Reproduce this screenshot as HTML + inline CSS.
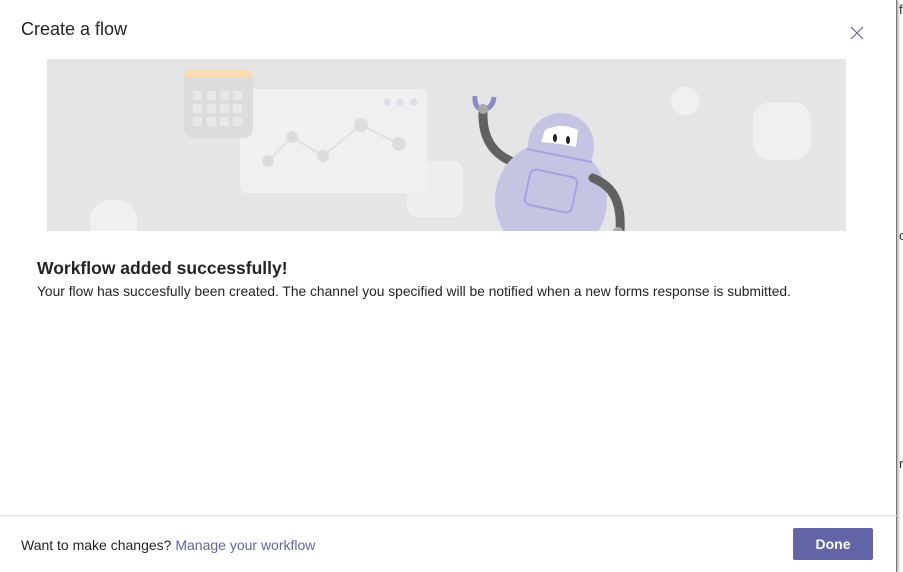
<!DOCTYPE html>
<html><head><meta charset="utf-8"><style>
*{margin:0;padding:0;box-sizing:border-box}
body{width:903px;height:572px;overflow:hidden;background:#fff;font-family:"Liberation Sans",sans-serif;color:#252423;position:relative}
.dlg{position:absolute;left:0;top:0;width:897px;height:572px;background:#fff;border-right:1px solid #777;box-shadow:1px 0 3px rgba(0,0,0,.4)}
.t{position:absolute;left:21px;top:19px;font-size:18px;color:#252423}
.x{position:absolute;left:850px;top:26px}
.ill{position:absolute;left:47px;top:59px;width:799px;height:172px;background:#e5e5e5;overflow:hidden}
.h{position:absolute;left:37px;top:258px;font-size:17.5px;font-weight:bold}
.p{position:absolute;left:37px;top:284px;font-size:13.8px;white-space:nowrap}
.sep{position:absolute;left:0;top:515px;width:897px;height:1px;background:#e1dfdd}
.f{position:absolute;left:21px;top:537px;font-size:14px}
.f a{color:#6264a7;text-decoration:none}
.btn{position:absolute;left:793px;top:528px;width:80px;height:32px;background:#6264a7;color:#fff;font-weight:bold;font-size:14px;text-align:center;line-height:32px;border-radius:2px}
.side{position:absolute;left:899px;font-size:13px;color:#333}
</style></head><body>
<div class="side" style="top:2px">f</div>
<div class="side" style="top:228px">o</div>
<div class="side" style="top:456px">r</div>
<div class="dlg">
<div class="t">Create a flow</div>
<svg class="x" width="14" height="14" viewBox="0 0 14 14"><path d="M1 1L13 13M13 1L1 13" stroke="#6264a7" stroke-width="1.2"/></svg>
<div class="ill">
<svg width="799" height="172" viewBox="47 59 799 172">
<rect x="240" y="89" width="187" height="104" rx="6" fill="#f0f0f0"/>
<circle cx="387" cy="102" r="3.5" fill="#dcdcea"/><circle cx="400" cy="102" r="3.5" fill="#dcdcea"/><circle cx="414" cy="102" r="3.5" fill="#dcdcea"/>
<polyline points="268,161 292,137 323,156 361,125 399,144" fill="none" stroke="#e0e0e0" stroke-width="2"/>
<g fill="#dcdcdc"><circle cx="268" cy="161" r="6"/><circle cx="292" cy="137" r="6"/><circle cx="323" cy="156" r="6"/><circle cx="361" cy="125" r="7"/><circle cx="399" cy="144" r="7"/></g>
<rect x="184" y="69" width="69" height="69" rx="9" fill="#dcdcdc"/>
<path d="M184 78a9 9 0 0 1 9-9h51a9 9 0 0 1 9 9z" fill="#fbdcb0"/>
<g fill="#e8e8e8">
<rect x="193" y="91" width="9" height="9"/><rect x="207" y="91" width="9" height="9"/><rect x="220" y="91" width="9" height="9"/><rect x="233" y="91" width="9" height="9"/>
<rect x="193" y="104" width="9" height="9"/><rect x="207" y="104" width="9" height="9"/><rect x="220" y="104" width="9" height="9"/><rect x="233" y="104" width="9" height="9"/>
<rect x="193" y="117" width="9" height="9"/><rect x="207" y="117" width="9" height="9"/><rect x="220" y="117" width="9" height="9"/><rect x="233" y="117" width="9" height="9"/>
</g>
<rect x="407" y="161" width="56" height="56" rx="10" fill="#f0f0f0" opacity=".9"/>
<rect x="90" y="200" width="47" height="50" rx="20" fill="#f0f0f0"/>
<circle cx="685" cy="101" r="14" fill="#f0f0f0"/>
<rect x="753" y="102" width="58" height="58" rx="18" fill="#f0f0f0"/>
<path d="M513 162C495 155 482 140 483 112" fill="none" stroke="#616161" stroke-width="9" stroke-linecap="round"/>
<path d="M475 96 Q474 108 483 110 Q493 108 494 97" fill="none" stroke="#8b8cc7" stroke-width="5"/>
<circle cx="483" cy="109" r="5" fill="#a8a8a8"/>
<circle cx="561" cy="146" r="33" fill="#c5c4e3"/>
<ellipse cx="551" cy="200" rx="56" ry="58" fill="#c5c4e3"/>
<path d="M527 149L592 162" stroke="#a4a4e0" stroke-width="2"/>
<path d="M545 130q16-8 33 0l-2 17q-18-4-35-5z" fill="#fff"/>
<ellipse cx="555" cy="138" rx="2" ry="4" fill="#252423"/><ellipse cx="568" cy="140" rx="2" ry="4" fill="#252423"/>
<rect x="527" y="173" width="48" height="36" rx="6" transform="rotate(12 551 191)" fill="none" stroke="#a4a4e0" stroke-width="2"/>
<path d="M593 178C612 186 622 200 620 232" fill="none" stroke="#616161" stroke-width="9" stroke-linecap="round"/>
<circle cx="618" cy="232" r="5" fill="#a8a8a8"/>
</svg>
</div>
<div class="h">Workflow added successfully!</div>
<div class="p">Your flow has succesfully been created. The channel you specified will be notified when a new forms response is submitted.</div>
<div class="sep"></div>
<div class="f">Want to make changes? <a>Manage your workflow</a></div>
<div class="btn">Done</div>
</div>
</body></html>
